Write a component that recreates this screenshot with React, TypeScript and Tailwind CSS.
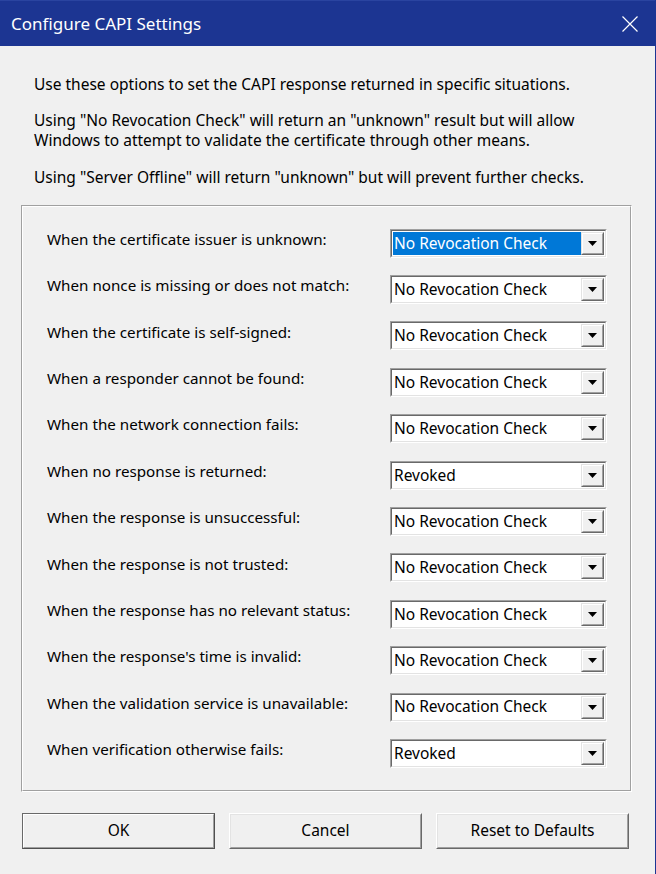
import React from "react";

const rows: [string, string, boolean][] = [
  ["When the certificate issuer is unknown:", "No Revocation Check", true],
  ["When nonce is missing or does not match:", "No Revocation Check", false],
  ["When the certificate is self-signed:", "No Revocation Check", false],
  ["When a responder cannot be found:", "No Revocation Check", false],
  ["When the network connection fails:", "No Revocation Check", false],
  ["When no response is returned:", "Revoked", false],
  ["When the response is unsuccessful:", "No Revocation Check", false],
  ["When the response is not trusted:", "No Revocation Check", false],
  ["When the response has no relevant status:", "No Revocation Check", false],
  ["When the response's time is invalid:", "No Revocation Check", false],
  ["When the validation service is unavailable:", "No Revocation Check", false],
  ["When verification otherwise fails:", "Revoked", false],
];

function Combo({ value, selected }: { value: string; selected: boolean }) {
  return (
    <div className="w-[217px] h-[29px] border border-t-[#a0a0a0] border-l-[#a0a0a0] border-b-white border-r-white text-[15.5px]">
      <div className="h-full border border-t-[#696969] border-l-[#696969] border-b-[#e3e3e3] border-r-[#e3e3e3] bg-white flex items-center pl-[1px] pr-[1px]">
        <div className="flex-1 h-[23px] flex items-center">
          <span
            className={
              selected
                ? "bg-[#0078d7] text-white h-full w-[188px] flex items-center pl-[1px]"
                : "pl-[1px]"
            }
          >
            {value}
          </span>
        </div>
        <div className="w-[23px] h-[23px] border border-t-[#e3e3e3] border-l-[#e3e3e3] border-b-[#696969] border-r-[#696969]">
          <div className="w-full h-full bg-[#f0f0f0] border border-t-white border-l-white border-b-[#a0a0a0] border-r-[#a0a0a0] flex items-center justify-center">
            <svg width="9" height="5" viewBox="0 0 9 5">
              <polygon points="0,0 9,0 4.5,5" fill="#000" />
            </svg>
          </div>
        </div>
      </div>
    </div>
  );
}

function Btn({ label, def }: { label: string; def?: boolean }) {
  return (
    <div
      className={
        "w-[193px] h-[36px] border " +
        (def
          ? "border-[#696969] border-b-[#505050] border-r-[#505050]"
          : "border-t-white border-l-white border-b-[#696969] border-r-[#696969]")
      }
    >
      <div
        className={
          "w-full h-full flex items-center justify-center bg-[#f0f0f0] border " +
          (def
            ? "border-t-white border-l-white border-b-[#a0a0a0] border-r-[#a0a0a0]"
            : "border-t-[#e3e3e3] border-l-[#e3e3e3] border-b-[#a0a0a0] border-r-[#a0a0a0]")
        }
      >
        {label}
      </div>
    </div>
  );
}

export default function App() {
  return (
    <div
      className="w-[656px] h-[874px] bg-[#f0f0f0] border-r border-[#1c3593] flex flex-col text-[15.5px] text-black"
      style={{ fontFamily: '"Noto Sans", "Open Sans", sans-serif' }}
    >
      <div className="h-[46px] bg-[#1c3592] border-t border-[#2a44a0] flex items-center justify-between pl-[11px] pr-[17px] text-white text-[17px]">
        <span>Configure CAPI Settings</span>
        <svg width="16" height="16" viewBox="0 0 16 16">
          <path d="M0.5 0.5 L15.5 15.5 M15.5 0.5 L0.5 15.5" stroke="#fff" strokeWidth="1.2" fill="none" />
        </svg>
      </div>
      <div className="pl-[34px] pt-[28px] leading-[20px]">
        <p>Use these options to set the CAPI response returned in specific situations.</p>
        <p className="mt-[16px]">
          Using "No Revocation Check" will return an "unknown" result but will allow
          <br />
          Windows to attempt to validate the certificate through other means.
        </p>
        <p className="mt-[17px]">Using "Server Offline" will return "unknown" but will prevent further checks.</p>
      </div>
      <div className="mt-[18px] ml-[21px] w-[611px] h-[587px] border border-t-[#a0a0a0] border-l-[#a0a0a0] border-b-white border-r-white">
        <div className="h-full border border-t-white border-l-white border-b-[#a0a0a0] border-r-[#a0a0a0] pt-[13px] pl-[24px]">
          {rows.map(([label, value, sel]) => (
            <div key={label} className="h-[46.4px] flex items-center">
              <span className="w-[343px] pb-[8px] text-[15.2px]">{label}</span>
              <Combo value={value} selected={sel} />
            </div>
          ))}
        </div>
      </div>
      <div className="mt-[21px] ml-[22px] flex gap-[14px]">
        <Btn label="OK" def />
        <Btn label="Cancel" />
        <Btn label="Reset to Defaults" />
      </div>
    </div>
  );
}
